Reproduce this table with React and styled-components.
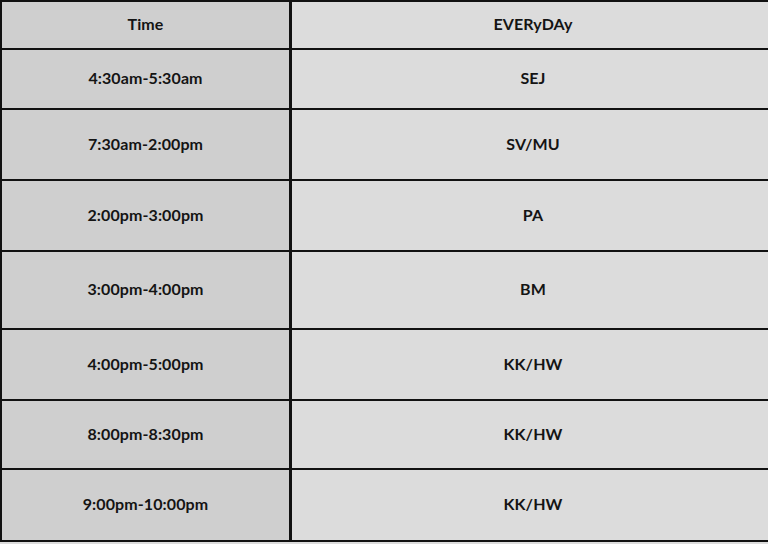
import React from "react";
import styled, { createGlobalStyle } from "styled-components";

const GlobalStyle = createGlobalStyle`
  html, body {
    margin: 0;
    padding: 0;
    background: #dcdcdc;
  }
  body {
    font-family: Lato, "Liberation Sans", sans-serif;
    overflow: hidden;
  }
`;

const Table = styled.div`
  width: 780px;
  border-top: 2px solid #111;
  border-left: 2px solid #111;
  box-sizing: border-box;
`;

const Row = styled.div`
  display: grid;
  grid-template-columns: 290px 1fr;
  height: ${(p) => p.height}px;
  border-bottom: 2px solid #111;
  box-sizing: border-box;
`;

const Cell = styled.div`
  display: flex;
  align-items: center;
  justify-content: center;
  padding-bottom: 3px;
  font-size: 16px;
  font-weight: 700;
  color: #141414;
  letter-spacing: 0.1px;
`;

const TimeCell = styled(Cell)`
  background: #cfcfcf;
  border-right: 3px solid #111;
`;

const DayCell = styled(Cell)`
  background: #dcdcdc;
  padding-right: 6px;
`;

const rows = [
  { time: "Time", day: "EVERyDAy", height: 48 },
  { time: "4:30am-5:30am", day: "SEJ", height: 60 },
  { time: "7:30am-2:00pm", day: "SV/MU", height: 71 },
  { time: "2:00pm-3:00pm", day: "PA", height: 71 },
  { time: "3:00pm-4:00pm", day: "BM", height: 78 },
  { time: "4:00pm-5:00pm", day: "KK/HW", height: 71 },
  { time: "8:00pm-8:30pm", day: "KK/HW", height: 69 },
  { time: "9:00pm-10:00pm", day: "KK/HW", height: 72 },
];

const App = () => {
  return (
    <>
      <GlobalStyle />
      <Table>
        {rows.map((r, i) => (
          <Row key={i} height={r.height}>
            <TimeCell>{r.time}</TimeCell>
            <DayCell>{r.day}</DayCell>
          </Row>
        ))}
      </Table>
    </>
  );
};

export default App;
